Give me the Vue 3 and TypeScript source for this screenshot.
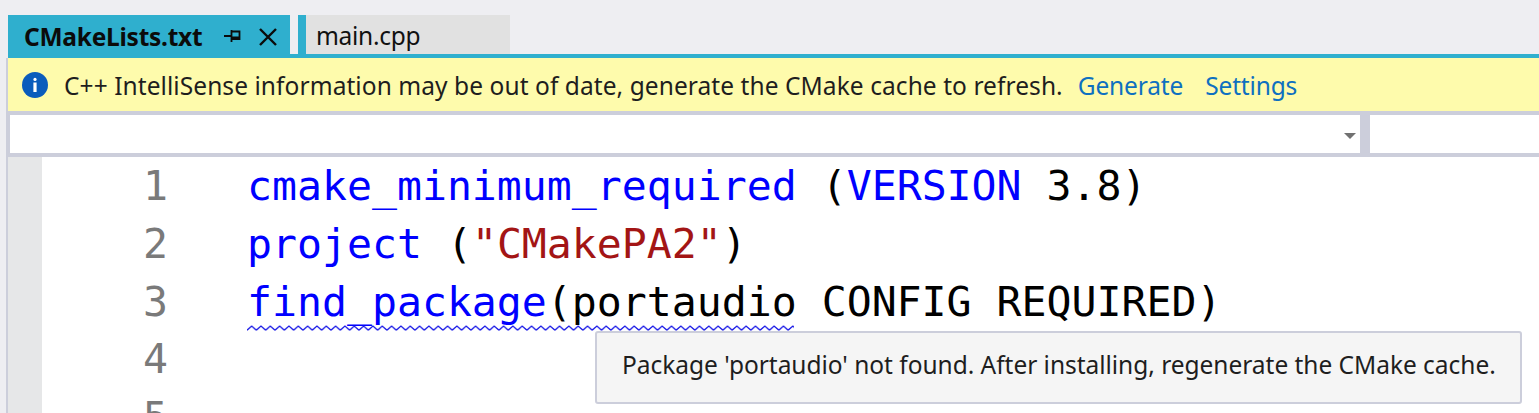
<script setup lang="ts">
const lines = [1, 2, 3, 4, 5]
</script>

<template>
  <div class="page">
    <div class="tabs">
      <div class="tab active">
        <span class="tab-title">CMakeLists.txt</span>
        <svg class="pin" width="17" height="14" viewBox="0 0 17 14" aria-hidden="true">
          <path d="M0 7H7M7.5 1V13M7 2.5H15.5V10H7M7 8.5H15.5" fill="none" stroke="#0b0b0b" stroke-width="1.8" />
        </svg>
        <svg class="close" width="20" height="18" viewBox="0 0 20 18" aria-hidden="true">
          <path d="M2 1L18 17M18 1L2 17" fill="none" stroke="#0b0b0b" stroke-width="2.4" />
        </svg>
      </div>
      <div class="tab inactive"><span class="tab-label">main.cpp</span></div>
    </div>
    <div class="accent"></div>
    <div class="body">
      <div class="infobar">
        <svg class="info" width="26" height="26" viewBox="0 0 26 26" aria-hidden="true">
          <circle cx="13" cy="13" r="13" fill="#0a5cbc" />
          <rect x="11.4" y="10.5" width="3.2" height="9.5" fill="#fff" />
          <rect x="11.4" y="5.8" width="3.2" height="3.2" rx="1.6" fill="#fff" />
        </svg>
        <span class="message">C++ IntelliSense information may be out of date, generate the CMake cache to refresh.</span>
        <a class="link first">Generate</a>
        <a class="link">Settings</a>
      </div>
      <div class="nav">
        <div class="combo main">
          <svg class="caret" width="12" height="6" viewBox="0 0 12 6" aria-hidden="true"><path d="M0 0H12L6 6Z" fill="#717171" /></svg>
        </div>
        <div class="combo side"></div>
      </div>
      <div class="editor">
        <div class="margin"></div>
        <div class="numbers">
          <div v-for="n in lines" :key="n" class="num">{{ n }}</div>
        </div>
        <div class="code">
          <div class="line"><span class="kw">cmake_minimum_required</span> (<span class="kw">VERSION</span> 3.8)</div>
          <div class="line"><span class="kw">project</span> (<span class="str">"CMakePA2"</span>)</div>
          <div class="line squiggled"><span class="kw">find_package</span>(portaudio CONFIG REQUIRED)<svg class="squiggle" width="547" height="7" aria-hidden="true">
              <defs>
                <pattern id="wave" width="9.33" height="7" patternUnits="userSpaceOnUse">
                  <path d="M0 5.2L4.66 1L9.33 5.2" fill="none" stroke="#1a1ae6" stroke-width="1.3" />
                </pattern>
              </defs>
              <rect width="547" height="7" fill="url(#wave)" />
            </svg></div>
        </div>
        <div class="tooltip"><span class="tooltip-text">Package 'portaudio' not found. After installing, regenerate the CMake cache.</span></div>
      </div>
    </div>
  </div>
</template>

<style scoped>
.page {
  width: 1539px;
  height: 413px;
  overflow: hidden;
  background: #eeeef2;
  padding-top: 15px;
  box-sizing: border-box;
  font-family: "Noto Sans", "Open Sans", sans-serif;
  color: #1e1e1e;
}
.tabs {
  display: flex;
  height: 39px;
  margin-left: 8px;
  gap: 8px;
}
.tab {
  display: flex;
  align-items: center;
  box-sizing: border-box;
}
.active {
  width: 282px;
  background: #2fafce;
  padding-left: 16px;
  color: #0b0b0b;
}
.tab-title {
  font-size: 24.5px;
  font-weight: 700;
  letter-spacing: -0.25px;
  width: 178px;
  white-space: nowrap;
  margin-top: 3px;
}
.pin { margin-left: 22px; flex: none; margin-top: 3px; }
.close { flex: none; margin-left: 17px; margin-top: 4px; }
.inactive {
  width: 212px;
  background: #e1e1e1;
  border-left: 8px solid #2fafce;
  padding-left: 10px;
  color: #111;
}
.tab-label {
  font-size: 24.5px;
  letter-spacing: -0.3px;
  margin-top: 1px;
}
.accent {
  height: 4px;
  margin-left: 8px;
  background: #2fafce;
}
.body {
  display: flex;
  flex-direction: column;
  margin-left: 6px;
  border-left: 2px solid #ccceDB;
  height: 355px;
}
.infobar {
  display: flex;
  align-items: center;
  height: 53px;
  box-sizing: border-box;
  background: #fefbac;
  padding-left: 14px;
  font-size: 24.5px;
  letter-spacing: 0.07px;
  white-space: nowrap;
}
.message { margin-left: 16px; margin-top: 2px; }
.link { color: #0e70c0; margin-top: 2px; letter-spacing: -0.15px; }
.first { margin-left: 15px; margin-right: 22px; }
.nav {
  display: flex;
  gap: 10px;
  height: 46px;
  box-sizing: border-box;
  background: #ccceDB;
  padding: 4px 0 4px 2px;
}
.combo {
  background: #fff;
  position: relative;
}
.main {
  width: 1350px;
  display: flex;
  align-items: center;
  justify-content: flex-end;
  padding-right: 4px;
  box-sizing: border-box;
}
.caret { margin-top: 3px; margin-right: 0; }
.side { flex: 1; }
.editor {
  position: relative;
  display: flex;
  flex: 1;
  background: #fff;
  overflow: hidden;
}
.margin {
  width: 34px;
  background: #e6e7e8;
  flex: none;
}
.numbers {
  width: 126px;
  flex: none;
  color: #7a7a7a;
  text-align: right;
  font-family: "DejaVu Sans Mono", monospace;
  font-size: 41.5px;
  line-height: 57.75px;
}
.code {
  margin-left: 79px;
  font-family: "DejaVu Sans Mono", monospace;
  font-size: 41.5px;
  line-height: 57.75px;
  color: #000;
  white-space: pre;
}
.kw { color: #0000ff; }
.str { color: #a31515; }
.squiggled { position: relative; }
.squiggle {
  position: absolute;
  left: 0;
  top: 52px;
}
.tooltip {
  position: absolute;
  left: 587px;
  top: 174px;
  width: 927px;
  height: 73px;
  box-sizing: border-box;
  display: flex;
  align-items: center;
  padding-left: 25px;
  background: #f5f5f5;
  border: 2px solid #ccceDB;
  border-radius: 3px;
  font-size: 24.5px;
  letter-spacing: -0.03px;
  white-space: nowrap;
}
.tooltip-text { margin-top: -6px; }
</style>
